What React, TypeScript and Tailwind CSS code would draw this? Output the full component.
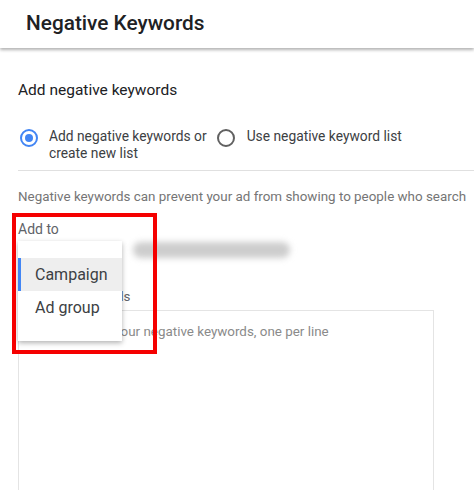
import React from "react";

const App: React.FC = () => {
  return (
    <div
      className="relative w-[474px] h-[490px] overflow-hidden bg-white"
      style={{ fontFamily: "Roboto, 'Liberation Sans', sans-serif" }}
    >
      {/* header */}
      <div className="h-[48px] flex items-center pl-[26px] bg-white shadow-[0_2px_3px_rgba(0,0,0,0.3)] relative z-10">
        <h1 className="text-[20.8px] font-medium text-[#202124]">
          Negative Keywords
        </h1>
      </div>

      <div className="pl-[18px]">
        <h2 className="mt-[30px] text-[15.5px] leading-[24px] text-[#202124]">
          Add negative keywords
        </h2>

        <div className="mt-[26px] flex items-start">
          <div className="flex items-start">
            <span className="mt-[1px] ml-[2px] w-[18px] h-[18px] rounded-full border-2 border-[#4285f4] flex items-center justify-center">
              <span className="w-[8px] h-[8px] rounded-full bg-[#4285f4]" />
            </span>
            <span className="ml-[11px] text-[13.8px] leading-[17px] text-[#3c4043]">
              Add negative keywords or
              <br />
              create new list
            </span>
          </div>
          <div className="flex items-start ml-[10px]">
            <span className="mt-[1px] w-[18px] h-[18px] rounded-full border-2 border-[#616161]" />
            <span className="ml-[12px] text-[13.8px] leading-[17px] text-[#3c4043]">
              Use negative keyword list
            </span>
          </div>
        </div>

        <div className="mt-[8px] h-px bg-[#e0e0e0]" />

        <p className="mt-[16px] text-[13.4px] leading-[20px] text-[#757575] whitespace-nowrap">
          Negative keywords can prevent your ad from showing to people who search
        </p>

        <p className="mt-[12px] text-[14px] leading-[20px] text-[#5f6368]">
          Add to
        </p>

        <div className="mt-[1px] h-[20px] flex items-center pl-[115px]">
          <div className="w-[157px] h-[16px] rounded-full bg-[#cdcdcd] blur-[3px]" />
        </div>

        <p className="mt-[27px] text-[13.4px] leading-[20px] text-[#5f6368]">
          Negative keywords
        </p>

        <div className="mt-[3px] w-[416px] h-[200px] border border-[#e4e4e4] pl-[9px] pt-[8px]">
          <span className="text-[13.4px] leading-[20px] text-[#8a8a8a]">
            Enter or paste your negative keywords, one per line
          </span>
        </div>
      </div>

      {/* open dropdown menu */}
      <div className="absolute left-[18px] top-[241px] w-[104px] h-[100px] bg-white shadow-[0_2px_5px_rgba(0,0,0,0.3)] py-[17px] z-20">
        <div className="relative h-[33px] bg-[#eeeeee] flex items-center pl-[17px] text-[16px] text-[#3c4043]">
          <span className="absolute left-0 top-0 bottom-0 w-[3px] bg-[#4285f4]" />
          Campaign
        </div>
        <div className="h-[33px] flex items-center pl-[17px] text-[16px] text-[#3c4043]">
          Ad group
        </div>
      </div>

      {/* annotation box */}
      <div className="absolute left-[12px] top-[213px] w-[145px] h-[141px] border-4 border-[#f50000] z-30" />
    </div>
  );
};

export default App;
